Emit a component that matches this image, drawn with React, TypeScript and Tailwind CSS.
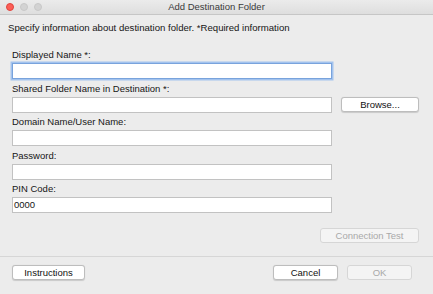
import React from "react";

const fields = [
  { label: "Displayed Name *:", value: "", focused: true, browse: false },
  { label: "Shared Folder Name in Destination *:", value: "", focused: false, browse: true },
  { label: "Domain Name/User Name:", value: "", focused: false, browse: false },
  { label: "Password:", value: "", focused: false, browse: false },
  { label: "PIN Code:", value: "0000", focused: false, browse: false },
];

function MacButton({
  label,
  width,
  disabled = false,
}: {
  label: string;
  width: string;
  disabled?: boolean;
}) {
  return (
    <button
      type="button"
      className={
        disabled
          ? `${width} flex h-[15px] items-center justify-center rounded-[3px] border border-[#d6d6d6] bg-[#f4f4f4] text-[9.5px] leading-none text-[#a9a9a9]`
          : `${width} flex h-[15px] items-center justify-center rounded-[3px] border border-[#bdbdbd] bg-white text-[9.5px] leading-none text-[#111] shadow-[0_0.5px_1px_rgba(0,0,0,0.15)]`
      }
    >
      {label}
    </button>
  );
}

export default function App() {
  return (
    <div
      className="flex h-[294px] w-[433px] flex-col bg-[#ececec] text-[#161616]"
      style={{ fontFamily: '"Liberation Sans", Arial, sans-serif' }}
    >
      {/* title bar */}
      <div className="relative flex h-[15px] items-center justify-center border-b border-[#c6c6c6] bg-gradient-to-b from-[#ebebeb] to-[#dedede]">
        <div className="absolute left-[6px] top-[3px] flex gap-[6px]">
          <span className="h-[8px] w-[8px] rounded-full border border-[#e0443e] bg-[#fc5f57]" />
          <span className="h-[8px] w-[8px] rounded-full border border-[#c8c8c8] bg-[#d3d3d3]" />
          <span className="h-[8px] w-[8px] rounded-full border border-[#c8c8c8] bg-[#d3d3d3]" />
        </div>
        <span className="text-[9.5px] leading-none text-[#3a3a3a]">Add Destination Folder</span>
      </div>

      <p className="ml-[8px] mt-[7px] text-[9.6px] leading-[12px]">
        Specify information about destination folder. *Required information
      </p>

      <div className="ml-[12px] mt-[14px] flex flex-col gap-[2.5px]">
        {fields.map((f) => (
          <div key={f.label} className="flex flex-col">
            <label className="h-[15px] text-[9.5px] leading-[13px]">{f.label}</label>
            <div className="flex items-center gap-[9px]">
              <div
                className={
                  f.focused
                    ? "flex h-[16px] w-[320px] items-center border border-[#79a3dc] bg-white px-[1px] text-[9.5px] shadow-[0_0_0_1.5px_#a3c3ee]"
                    : "flex h-[16px] w-[320px] items-center border border-[#c2c2c2] bg-white px-[1px] text-[9.5px]"
                }
              >
                {f.value}
              </div>
              {f.browse && <MacButton label="Browse..." width="w-[78px]" />}
            </div>
          </div>
        ))}
      </div>

      <div className="mr-[14px] mt-[15px] flex justify-end">
        <MacButton label="Connection Test" width="w-[99px]" disabled />
      </div>

      <div className="mt-[13px] h-px bg-[#d6d6d6]" />

      <div className="mt-[8px] flex items-center px-[12px]">
        <MacButton label="Instructions" width="w-[73px]" />
        <div className="ml-auto mr-[9px] flex gap-[9px]">
          <MacButton label="Cancel" width="w-[65px]" />
          <MacButton label="OK" width="w-[65px]" disabled />
        </div>
      </div>
    </div>
  );
}
